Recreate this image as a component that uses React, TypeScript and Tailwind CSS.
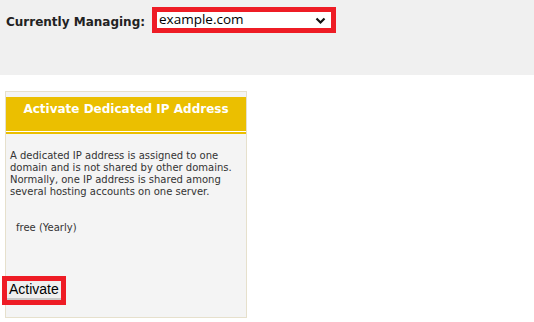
import React from "react";

const App: React.FC = () => {
  return (
    <div className="w-[534px] h-[322px] bg-white overflow-hidden font-['DejaVu_Sans',Verdana,sans-serif]">
      {/* domain picker band */}
      <div className="h-[75px] bg-[#f0f0f0] flex items-start pt-[7px] pl-[6px]">
        <span className="text-[12px] font-bold text-[#222] mt-[6px]">Currently Managing:</span>
        <div className="ml-[7px] border-[5px] border-[#ee1c25] bg-white w-[184px] h-[26px] flex items-center justify-between pl-[2px] pr-[5px]">
          <span className="text-[13.5px] leading-none text-black font-['Open_Sans','DejaVu_Sans',sans-serif]">example.com</span>
          <svg width="11" height="8" viewBox="0 0 11 8" className="mt-[1px]">
            <path d="M1.5 1.5 L5.5 5.5 L9.5 1.5" stroke="#111" strokeWidth="2.2" fill="none" />
          </svg>
        </div>
      </div>

      {/* product card */}
      <div className="ml-[5px] mt-[16px] w-[242px] h-[227px] border border-[#e6e0cc] bg-[#f4f4f4] flex flex-col pt-[5px]">
        <div className="h-[34px] bg-[#ebbf00] flex justify-center pt-[3px]">
          <span className="text-[12px] font-bold text-white">Activate Dedicated IP Address</span>
        </div>
        <div className="h-px bg-white" />
        <div className="h-[2px] bg-[#ebbf00]" />
        <p className="mt-[16px] px-[4px] text-[10px] leading-[12px] text-[#333]">
          A dedicated IP address is assigned to one domain and is not shared by other domains. Normally, one IP address is shared among several hosting accounts on one server.
        </p>
        <p className="mt-[24px] pl-[10px] text-[10px] leading-[12px] text-[#333]">free (Yearly)</p>
        <div className="mt-[47px] pl-[1px] flex">
          <button className="outline-[5px] outline-solid outline-[#ee1c25] bg-[#efefef] border-b-2 border-[#c8c8c8] h-[19px] px-[2px] text-[14px] leading-[17px] text-black font-['Liberation_Sans',Arial,sans-serif]">
            Activate
          </button>
        </div>
      </div>
    </div>
  );
};

export default App;
